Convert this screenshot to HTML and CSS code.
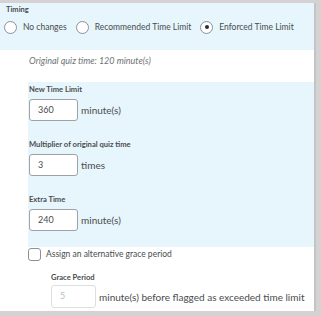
FILE: index.html
```html
<!DOCTYPE html>
<html lang="en">
<head>
  <meta charset="UTF-8" />
  <title>Timing</title>
  <link rel="stylesheet" href="styles.css">
</head>
<body>
  <div class="frame">
    <div class="timing">
      <div class="heading">Timing</div>
      <div class="radios">
        <label class="radio"><span class="dot"></span>No changes</label>
        <label class="radio"><span class="dot"></span>Recommended Time Limit</label>
        <label class="radio"><span class="dot checked"></span>Enforced Time Limit</label>
      </div>
    </div>

    <div class="original">Original quiz time: 120 minute(s)</div>

    <div class="panel">
      <div class="group">
        <div class="label">New Time Limit</div>
        <div class="field"><div class="box">360</div><span>minute(s)</span></div>
      </div>
      <div class="group">
        <div class="label">Multiplier of original quiz time</div>
        <div class="field"><div class="box">3</div><span>times</span></div>
      </div>
      <div class="group">
        <div class="label">Extra Time</div>
        <div class="field"><div class="box">240</div><span>minute(s)</span></div>
      </div>
    </div>

    <label class="check"><span class="tick"></span>Assign an alternative grace period</label>

    <div class="grace">
      <div class="label">Grace Period</div>
      <div class="field"><div class="box disabled">5</div><span>minute(s) before flagged as exceeded time limit</span></div>
    </div>
  </div>
</body>
</html>
```

FILE: styles.css
```css
body {
  margin: 0;
  background: #d4d2d2;
  font-family: Lato, "Open Sans", sans-serif;
  color: #494c4e;
  width: 321px;
  height: 316px;
  overflow: hidden;
}
.frame {
  margin-top: 3px;
  width: 314px;
  height: 308px;
  background: #fff;
  border-right: 2px solid #c4c4c4;
}
.timing {
  background: #e7f5fc;
  height: 47px;
  padding: 2px 0 0 4px;
  box-sizing: border-box;
}
.heading {
  font-size: 7.5px;
  font-weight: bold;
  line-height: 10px;
  padding-left: 2px;
}
.radios {
  display: flex;
  margin-top: 5px;
  gap: 9px;
  white-space: nowrap;
}
.radio {
  display: flex;
  align-items: center;
  gap: 6px;
  font-size: 8.5px;
  line-height: 14px;
}
.dot {
  flex-shrink: 0;
  width: 11px;
  height: 11px;
  border: 1px solid #8d9194;
  border-radius: 50%;
  background: #fff;
  display: flex;
  align-items: center;
  justify-content: center;
}
.dot.checked::after {
  content: "";
  width: 4px;
  height: 4px;
  border-radius: 50%;
  background: #2b2d2e;
}
.original {
  height: 32px;
  padding: 6px 0 0 29px;
  box-sizing: border-box;
  font-size: 9px;
  line-height: 10px;
  font-style: italic;
  color: #6e7376;
}
.panel {
  margin-left: 28px;
  background: #e7f5fc;
  padding: 2px 0 16px 1px;
}
.group + .group { margin-top: 18px; }
.label {
  font-size: 7.6px;
  font-weight: bold;
  line-height: 10px;
  margin-bottom: 5px;
}
.field {
  display: flex;
  align-items: center;
  gap: 3px;
  font-size: 10px;
  white-space: nowrap;
}
.box {
  flex-shrink: 0;
  width: 49px;
  height: 22px;
  box-sizing: border-box;
  border: 1px solid #9ea2a5;
  border-radius: 3px;
  background: #fff;
  font-size: 9px;
  line-height: 20px;
  padding-left: 8px;
}
.box.disabled {
  width: 45px;
  height: 23px;
  border-color: #dcdfe1;
  color: #b8bcbf;
}
.check {
  display: flex;
  align-items: center;
  gap: 5px;
  margin: 1px 0 0 28px;
  font-size: 8.5px;
  line-height: 13px;
}
.tick {
  width: 13px;
  height: 13px;
  box-sizing: border-box;
  border: 1px solid #8d9194;
  border-radius: 3px;
  background: #fff;
}
.grace {
  margin: 11px 0 0 51px;
}
.grace .label { margin-bottom: 3px; }
```
